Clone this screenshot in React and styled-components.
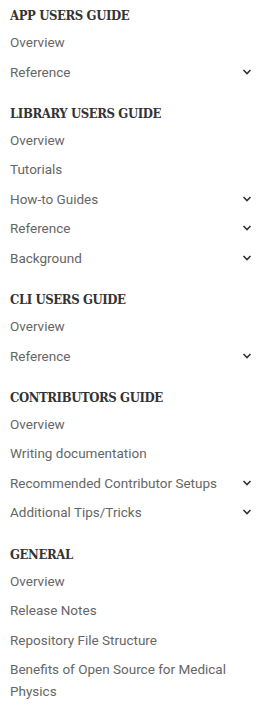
import styled, { createGlobalStyle } from "styled-components";

const SECTIONS = [
    ['APP USERS GUIDE', [['Overview'], ['Reference', true]]],
    ['LIBRARY USERS GUIDE', [
        ['Overview'], ['Tutorials'], ['How-to Guides', true], ['Reference', true], ['Background', true]
    ]],
    ['CLI USERS GUIDE', [['Overview'], ['Reference', true]]],
    ['CONTRIBUTORS GUIDE', [
        ['Overview'], ['Writing documentation'],
        ['Recommended Contributor Setups', true], ['Additional Tips/Tricks', true]
    ]],
    ['GENERAL', [
        ['Overview'], ['Release Notes'], ['Repository File Structure'],
        ['Benefits of Open Source for Medical Physics']
    ]],
];

const GlobalStyle = createGlobalStyle`
    body {
        margin: 0;
        background: #fff;
    }
`;

function Chevron() {
    return (
        <svg width="10" height="6" viewBox="0 0 10 6">
            <path d="M1.5 1 L5 4.5 L8.5 1" fill="none" stroke="#333" strokeWidth="1.6" />
        </svg>
    );
}

export default function App() {
    return (
        <Nav>
            <GlobalStyle />
            {SECTIONS.map(([title, items]) => (
                <Section key={title}>
                    <Heading>{title}</Heading>
                    {items.map(([label, expandable]) => (
                        <Item key={label}>
                            <span>{label}</span>
                            {expandable && <Toggle><Chevron /></Toggle>}
                        </Item>
                    ))}
                </Section>
            ))}
        </Nav>
    );
}

const Nav = styled.nav`
    width: 261px;
    padding: 6.25px 0 0 10px;
    box-sizing: border-box;
    display: flex;
    flex-direction: column;
    gap: 17.75px;
`;

const Section = styled.section`
    display: flex;
    flex-direction: column;
`;

const Heading = styled.h3`
    margin: 0 0 1px;
    font-family: "DejaVu Serif", serif;
    font-stretch: condensed;
    font-weight: bold;
    font-size: 13px;
    letter-spacing: -0.4px;
    line-height: 20px;
    color: #333;
`;

const Item = styled.a`
    display: flex;
    align-items: center;
    justify-content: space-between;
    padding: 3.75px 9px 3.75px 0;
    font-family: Roboto, "Liberation Sans", sans-serif;
    font-size: 13.5px;
    line-height: 22px;
    color: #666;
    & > span {
        max-width: 225px;
    }
`;

const Toggle = styled.span`
    display: flex;
    align-items: center;
`;
